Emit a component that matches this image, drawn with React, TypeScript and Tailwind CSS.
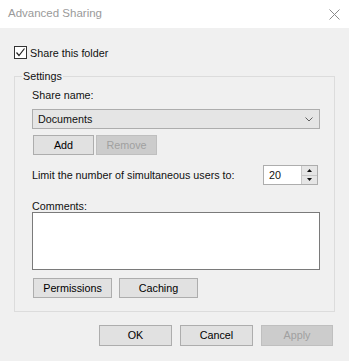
function Button({ label, disabled = false, className = "" }: { label: string; disabled?: boolean; className?: string }) {
  return (
    <button
      type="button"
      className={
        "flex items-center justify-center border leading-none " +
        (disabled
          ? "bg-[#cccccc] border-[#bfbfbf] text-[#a0a0a0] "
          : "bg-[#e1e1e1] border-[#adadad] text-black ") +
        className
      }
    >
      {label}
    </button>
  );
}

export default function App() {
  return (
    <div className="w-[349px] h-[361px] bg-[#f0f0f0] text-[10.75px] text-[#111111] font-['Liberation_Sans',Arial,sans-serif] overflow-hidden whitespace-nowrap">
      {/* Title bar */}
      <div className="h-[28px] bg-white flex items-center justify-between pl-[8px] pr-[9px]">
        <span className="text-[#9a9a9a] text-[11.5px]">Advanced Sharing</span>
        <svg width="11" height="11" viewBox="0 0 11 11">
          <path d="M0.5 0.5 L10.5 10.5 M10.5 0.5 L0.5 10.5" stroke="#8a8a8a" strokeWidth="1" fill="none" />
        </svg>
      </div>

      {/* Share this folder */}
      <div className="mt-[18px] ml-[14px] h-[13px] flex items-center gap-[3px]">
        <span className="w-[13px] h-[13px] border border-[#333333] bg-white flex items-center justify-center">
          <svg width="11" height="11" viewBox="0 0 11 11">
            <path d="M1.5 5.5 L4 8.5 L9.5 1.5" stroke="#222" strokeWidth="1.2" fill="none" />
          </svg>
        </span>
        <span className="leading-[14px]">Share this folder</span>
      </div>

      {/* Settings group */}
      <fieldset className="mt-[10px] ml-[14px] w-[321px] border border-[#dcdcdc]">
        <legend className="ml-[7px] px-[1px] leading-[14px]">Settings</legend>

        <div className="pl-[17px] pb-[13px]">
          <div className="mt-[5px] leading-[14px]">Share name:</div>

          <div className="mt-[7px] w-[288px] h-[20px] bg-[#e5e5e5] border border-[#adadad] flex items-center justify-between pl-[5px] pr-[6px]">
            <span className="leading-none">Documents</span>
            <svg width="8" height="5" viewBox="0 0 8 5">
              <path d="M0.5 0.5 L4 4 L7.5 0.5" stroke="#606060" strokeWidth="1" fill="none" />
            </svg>
          </div>

          <div className="mt-[6px] flex gap-[2px] pl-[1px]">
            <Button label="Add" className="w-[61px] h-[20px]" />
            <Button label="Remove" disabled className="w-[61px] h-[20px]" />
          </div>

          <div className="mt-[10px] w-[286px] h-[20px] flex items-center justify-between">
            <span className="leading-none">Limit the number of simultaneous users to:</span>
            <div className="w-[55px] h-[20px] bg-white border border-[#adadad] flex">
              <span className="flex-1 flex items-center pl-[5px] leading-none">20</span>
              <div className="w-[16px] flex flex-col">
                <div className="flex-1 bg-[#e6e6e6] border-l border-b border-[#c8c8c8] flex items-center justify-center">
                  <svg width="5" height="3" viewBox="0 0 5 3"><path d="M0 3 L2.5 0 L5 3 Z" fill="#111" /></svg>
                </div>
                <div className="flex-1 bg-[#e6e6e6] border-l border-[#c8c8c8] flex items-center justify-center">
                  <svg width="5" height="3" viewBox="0 0 5 3"><path d="M0 0 L2.5 3 L5 0 Z" fill="#111" /></svg>
                </div>
              </div>
            </div>
          </div>

          <div className="mt-[15px] h-[12px] leading-[12px]">Comments:</div>
          <div className="w-[288px] h-[58px] bg-white border border-[#7a7a7a]" />

          <div className="mt-[8px] flex gap-[7px] pl-[1px]">
            <Button label="Permissions" className="w-[79px] h-[20px]" />
            <Button label="Caching" className="w-[79px] h-[20px]" />
          </div>
        </div>
      </fieldset>

      {/* Dialog buttons */}
      <div className="mt-[13px] flex justify-end gap-[8px] pr-[16px]">
        <Button label="OK" className="w-[73px] h-[21px]" />
        <Button label="Cancel" className="w-[73px] h-[21px]" />
        <Button label="Apply" disabled className="w-[72px] h-[21px]" />
      </div>
    </div>
  );
}
